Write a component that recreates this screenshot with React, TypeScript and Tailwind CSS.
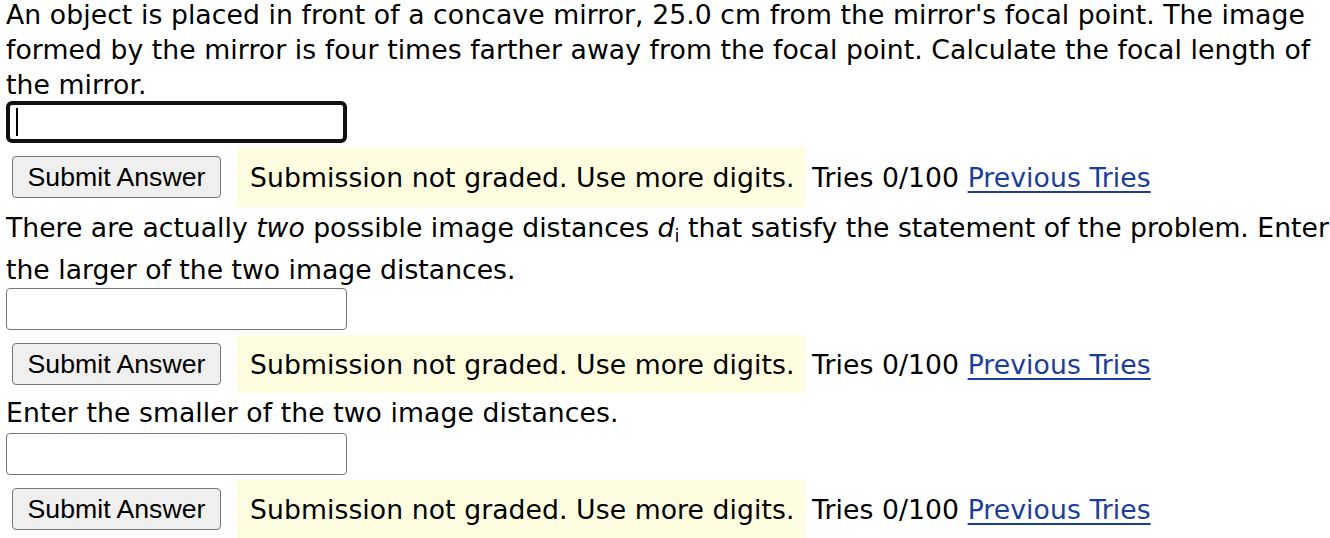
import React from "react";

const verdana = "font-['Verdana','DejaVu_Sans',sans-serif]";

const Feedback = ({ h }: { h: string }) => (
  <div className={`flex items-center ${h}`}>
    <button
      type="button"
      className="ml-[6px] h-[42px] w-[209px] rounded-[4px] border-[1.67px] border-[#767676] bg-[#efefef] text-[26.67px] leading-none tracking-normal text-black font-['Liberation_Sans',Arial,sans-serif]"
    >
      Submit Answer
    </button>
    <div className="ml-[16px] flex h-full w-[568px] items-center bg-[#fffde0] pl-[13px] pt-[1px]">
      Submission not graded. Use more digits.
    </div>
    <span className="ml-[7px] whitespace-nowrap pt-[1px]">
      Tries 0/100{" "}
      <a href="#" className="text-[#1a3e9a] underline decoration-[2px] underline-offset-[4px]">
        Previous Tries
      </a>
    </span>
  </div>
);

const AnswerBox = ({ focused }: { focused?: boolean }) => (
  <div className="relative h-[42px] w-[341px]">
    <input
      type="text"
      className={
        focused
          ? "h-full w-full rounded-[6px] border-[4px] border-[#101010] bg-white outline-none"
          : "h-full w-full rounded-[4px] border-[1.67px] border-[#767676] bg-white outline-none"
      }
    />
    {focused && (
      <span className="absolute left-[10px] top-[7px] h-[28px] w-[2px] bg-black" />
    )}
  </div>
);

export default function App() {
  return (
    <div className={`h-[538px] w-[1330px] overflow-hidden bg-white pl-[6px] text-[26.67px] tracking-[0.07px] text-black ${verdana}`}>
      <p className="-mt-[3px] h-[104px] leading-[35px]">
        An object is placed in front of a concave mirror, 25.0 cm from the mirror's focal point. The image
        formed by the mirror is four times farther away from the focal point. Calculate the focal length of
        the mirror.
      </p>
      <AnswerBox focused />
      <div className="mt-[4px]">
        <Feedback h="h-[60px]" />
      </div>

      <p className="h-[81px] leading-[42px] tracking-normal whitespace-nowrap">
        There are actually <i>two</i> possible image distances <i>d</i>
        <sub className="text-[18px] leading-none">i</sub> that satisfy the statement of the problem. Enter
        <br />
        the larger of the two image distances.
      </p>
      <AnswerBox />
      <div className="mt-[5px]">
        <Feedback h="h-[58px]" />
      </div>

      <p className="h-[40px] leading-[40px]">Enter the smaller of the two image distances.</p>
      <AnswerBox />
      <div className="mt-[5px]">
        <Feedback h="h-[58px]" />
      </div>
    </div>
  );
}
